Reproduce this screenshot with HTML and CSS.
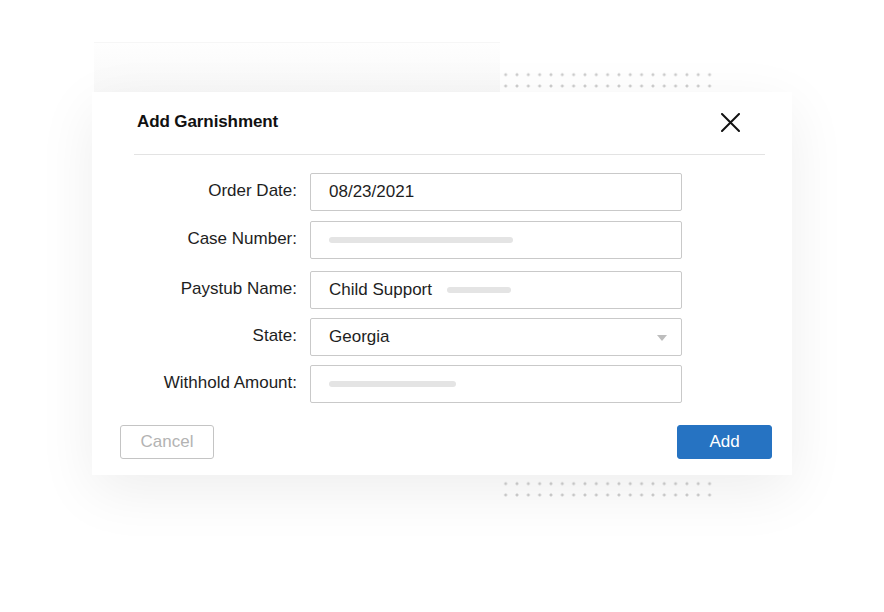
FILE: index.html
```html
<!DOCTYPE html>
<html lang="en">
<head>
<meta charset="utf-8">
<title>Add Garnishment</title>
<link rel="stylesheet" href="styles.css">
</head>
<body>
<div class="stage">
  <div class="back-card"></div>
  <div class="dots dots-top"></div>
  <div class="dots dots-bottom"></div>

  <div class="modal">
    <div class="modal-header">
      <h1 class="modal-title">Add Garnishment</h1>
      <svg class="close-icon" width="19" height="19" viewBox="0 0 19 19" aria-label="Close">
        <path d="M1 1 L18 18 M18 1 L1 18" stroke="#111" stroke-width="2" fill="none" stroke-linecap="round"/>
      </svg>
    </div>

    <div class="form">
      <div class="row">
        <label class="label">Order Date:</label>
        <div class="field"><span class="value">08/23/2021</span></div>
      </div>
      <div class="row">
        <label class="label">Case Number:</label>
        <div class="field"><span class="bar bar-case"></span></div>
      </div>
      <div class="row row-paystub">
        <label class="label">Paystub Name:</label>
        <div class="field"><span class="value">Child Support</span><span class="bar bar-paystub"></span></div>
      </div>
      <div class="row row-state">
        <label class="label">State:</label>
        <div class="field field-select"><span class="value">Georgia</span><span class="caret"></span></div>
      </div>
      <div class="row row-amount">
        <label class="label">Withhold Amount:</label>
        <div class="field"><span class="bar bar-amount"></span></div>
      </div>
    </div>

    <div class="modal-footer">
      <button class="btn btn-cancel">Cancel</button>
      <button class="btn btn-add">Add</button>
    </div>
  </div>
</div>
</body>
</html>
```

FILE: styles.css
```css
* { box-sizing: border-box; }

html, body {
  margin: 0;
  padding: 0;
  background: #ffffff;
}

body {
  font-family: "Liberation Sans", Arial, Helvetica, sans-serif;
  color: #1e1e1e;
}

.stage {
  position: relative;
  width: 884px;
  height: 612px;
  padding: 92px 0 0 92px;
  overflow: hidden;
}

.back-card {
  position: absolute;
  left: 94px;
  top: 42px;
  width: 406px;
  height: 60px;
  border-top: 1px solid #f6f6f6;
  background: linear-gradient(#fefefe, #f7f7f7);
}

.dots {
  position: absolute;
  left: 500px;
  width: 215px;
  height: 23px;
  background-image: radial-gradient(circle, #cccccc 1.2px, rgba(204,204,204,0) 1.7px);
  background-size: 11.33px 11.33px;
}

.dots-top { top: 69px; }
.dots-bottom { top: 478px; }

.modal {
  position: relative;
  width: 700px;
  height: 383px;
  background: #ffffff;
  box-shadow: 0 16px 55px rgba(0, 0, 0, 0.07);
  display: flex;
  flex-direction: column;
}

.modal-header {
  height: 63px;
  margin: 0 27px 0 42px;
  padding: 0 25px 2px 3px;
  border-bottom: 1px solid #e3e3e3;
  display: flex;
  align-items: center;
  justify-content: space-between;
}

.modal-title {
  margin: 0;
  font-size: 17px;
  font-weight: 700;
  color: #111;
  letter-spacing: -0.1px;
}

.close-icon { display: block; }

.form {
  display: flex;
  flex-direction: column;
  gap: 10px;
  padding-top: 18px;
}

.row {
  display: grid;
  grid-template-columns: 205px 372px;
  column-gap: 13px;
  align-items: center;
}

.row-paystub { margin-top: 2px; }
.row-state { margin-top: -1px; }
.row-amount { margin-top: -1px; }

.label {
  text-align: right;
  font-size: 17px;
  color: #1e1e1e;
  padding-bottom: 3px;
}

.field {
  height: 38px;
  border: 1px solid #c9c9c9;
  border-radius: 2px;
  padding: 0 14px 0 18px;
  display: flex;
  align-items: center;
  gap: 15px;
}

.value {
  font-size: 17px;
  color: #1e1e1e;
}

.bar {
  display: block;
  height: 6px;
  border-radius: 3px;
  background: #e4e4e4;
}

.bar-case { width: 184px; }
.bar-paystub { width: 64px; }
.bar-amount { width: 127px; }

.field-select { justify-content: space-between; }

.caret {
  width: 0;
  height: 0;
  border-left: 5px solid transparent;
  border-right: 5px solid transparent;
  border-top: 6px solid #bdbdbd;
  margin-top: 1px;
}

.modal-footer {
  display: flex;
  justify-content: space-between;
  padding: 22px 20px 0 28px;
}

.btn {
  height: 34px;
  border-radius: 3px;
  font-family: "Liberation Sans", Arial, Helvetica, sans-serif;
  font-size: 17px;
  padding: 0;
  cursor: pointer;
}

.btn-cancel {
  width: 94px;
  background: #ffffff;
  border: 1px solid #c4c4c4;
  color: #b3b3b3;
}

.btn-add {
  width: 95px;
  background: #2673c2;
  border: 1px solid #2673c2;
  color: #ffffff;
}
```
